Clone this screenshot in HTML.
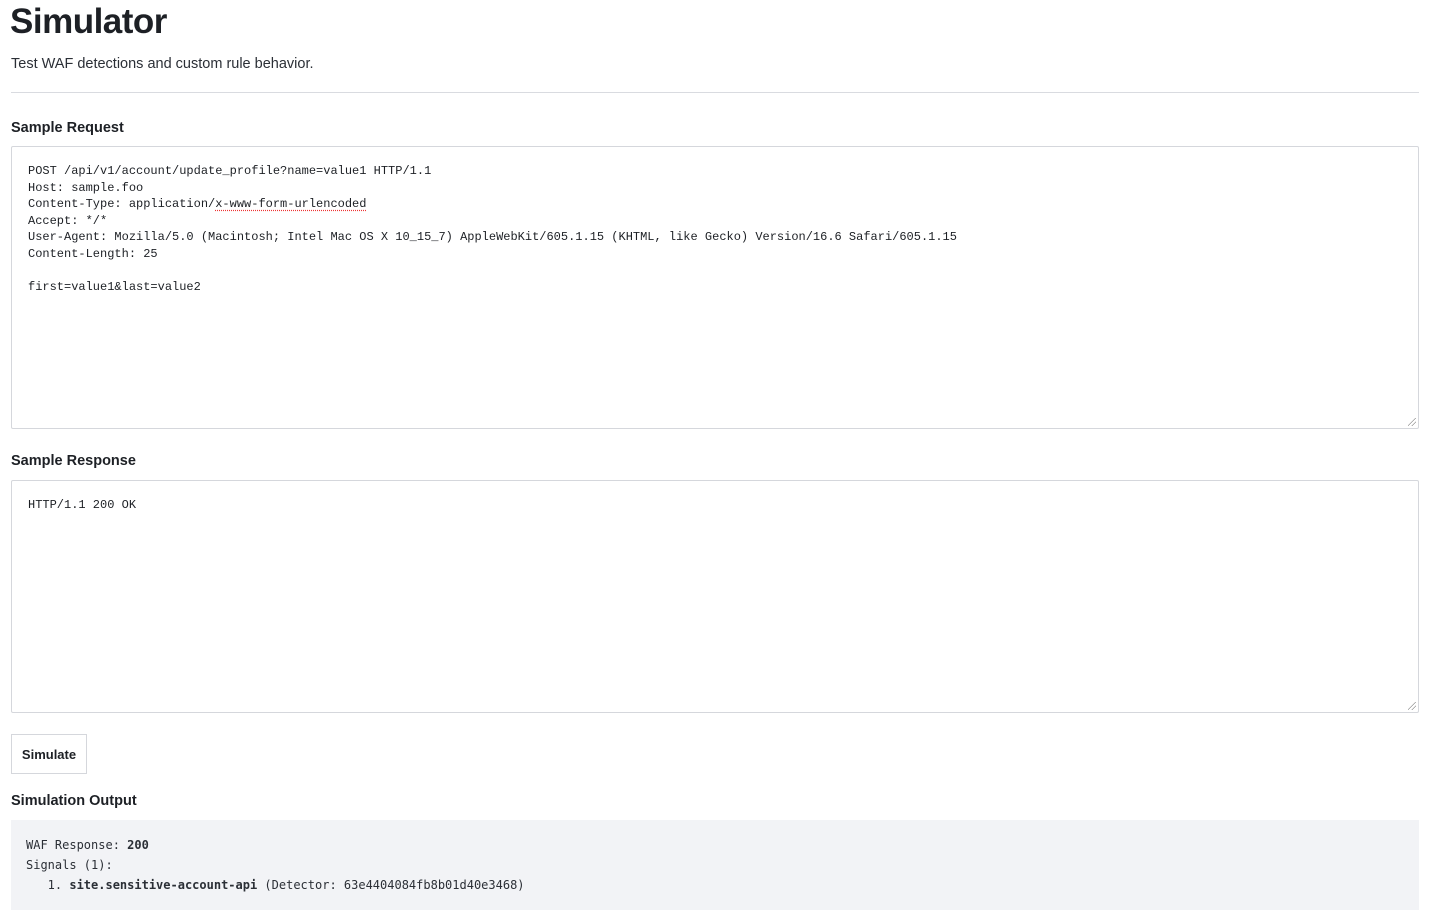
<!DOCTYPE html>
<html><head><meta charset="utf-8"><style>
*{box-sizing:border-box;margin:0;padding:0}
body{width:1430px;height:922px;background:#fff;color:#1f2328;font-family:"Liberation Sans",sans-serif;position:relative;overflow:hidden}
.a{position:absolute}
h1{position:absolute;left:10px;top:2px;font-size:35px;font-weight:bold;letter-spacing:-0.5px;color:#1d2025}
.sub{left:11px;top:56px;font-size:14.5px;color:#2b2f36}
.hr{left:11px;top:92px;width:1408px;height:1px;background:#d9dbe0}
.lbl{left:11px;font-size:14.5px;font-weight:bold;color:#1d2025}
.ta{left:11px;width:1408px;border:1px solid #d5d7dc;border-radius:2px;background:#fff;padding:16px 16px;font-family:"Liberation Mono",monospace;font-size:12px;line-height:16.6px;white-space:pre;color:#1d2025}
.grip{position:absolute;right:2px;bottom:2px;width:8px;height:8px;background:linear-gradient(135deg,transparent 45%,#999 45%,#999 52%,transparent 52%,transparent 70%,#999 70%,#999 77%,transparent 77%)}
.btn{left:11px;top:734px;width:76px;height:40px;border:1px solid #d5d7dc;font-size:13px;font-weight:bold;display:flex;align-items:center;justify-content:center;color:#1d2025}
.out{left:11px;top:820px;width:1408px;height:90px;background:#f2f3f6;padding:15px 15px;font-family:"DejaVu Sans Mono",monospace;font-size:12px;line-height:20px;white-space:pre;color:#2b2f36}
.sp{text-decoration:underline dotted #e33;text-underline-offset:3px}
</style></head><body>
<h1>Simulator</h1>
<div class="a sub">Test WAF detections and custom rule behavior.</div>
<div class="a hr"></div>
<div class="a lbl" style="top:120px">Sample Request</div>
<div class="a ta" style="top:146px;height:283px">POST /api/v1/account/update_profile?name=value1 HTTP/1.1
Host: sample.foo
Content-Type: application/<span class="sp">x-www-form-urlencoded</span>
Accept: */*
User-Agent: Mozilla/5.0 (Macintosh; Intel Mac OS X 10_15_7) AppleWebKit/605.1.15 (KHTML, like Gecko) Version/16.6 Safari/605.1.15
Content-Length: 25

first=value1&amp;last=value2<div class="grip"></div></div>
<div class="a lbl" style="top:453px">Sample Response</div>
<div class="a ta" style="top:480px;height:233px">HTTP/1.1 200 OK<div class="grip"></div></div>
<div class="a btn">Simulate</div>
<div class="a lbl" style="top:793px">Simulation Output</div>
<div class="a out">WAF Response: <b>200</b>
Signals (1):
   1. <b>site.sensitive-account-api</b> (Detector: 63e4404084fb8b01d40e3468)</div>
</body></html>
